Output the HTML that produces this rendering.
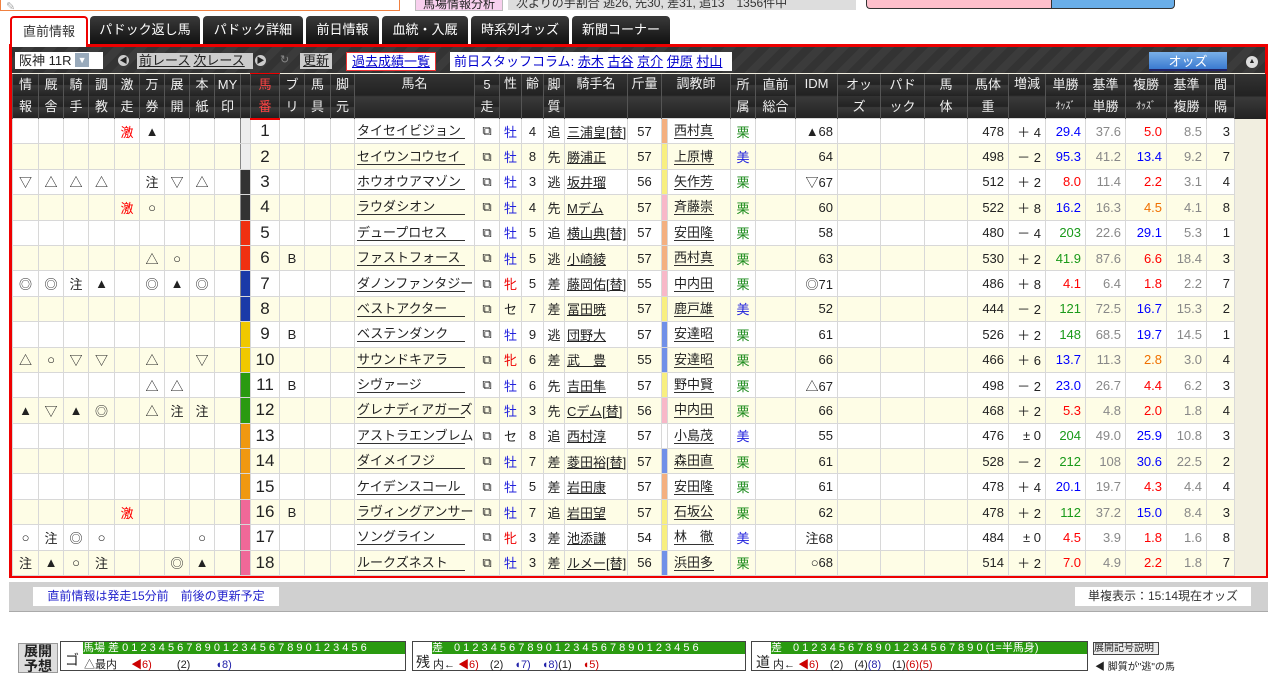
<!DOCTYPE html>
<html><head><meta charset="utf-8">
<style>
*{box-sizing:border-box;margin:0;padding:0}
body{width:1280px;height:670px;overflow:hidden;background:#fff;font-family:"Liberation Sans","Noto Sans CJK JP",sans-serif;font-size:13px;color:#222;position:relative}
.abs{position:absolute}
.tab{position:absolute;top:16px;height:28px;background:linear-gradient(#3a3a3a,#111);color:#fff;border-radius:4px 4px 0 0;text-align:center;line-height:27px;font-size:13px}
.tab.on{background:#fff;color:#333;border:2px solid #e00;border-bottom:none;height:31px}
#box{position:absolute;left:9px;top:44px;width:1259px;height:534px;border:3px solid #e00;background:#f1eee0}
#bar{position:absolute;left:12px;top:47px;width:1253px;height:26px;background:repeating-linear-gradient(135deg,#333 0 8px,#3b3b3b 8px 16px)}
table{position:absolute;left:12px;top:73px;border-collapse:collapse;table-layout:fixed;width:1253px}
th{background:linear-gradient(#333,#222 48%,#3a3a3a 52%,#222);color:#eee;font-weight:normal;font-size:13px;height:22.5px;line-height:20px;border-left:1px solid #555;vertical-align:middle}
td{height:25.4px;border:1px solid #d8d8d8;text-align:center;white-space:nowrap;overflow:hidden;font-size:13px;padding:0}
tr.y td{background:#fefde6}
tr.w td{background:#fff}
td.n{font-size:17px;color:#222}
td.nm{text-align:left;padding-left:2px}
td.nm span{border-bottom:1px solid #333;display:inline-block;width:108px;line-height:15px}
td.jk{text-align:left;padding-left:2px;text-decoration:underline}
td.tr{text-align:left;padding-left:6px}
td.tr span{border-bottom:1px solid #333;display:inline-block;width:40px;line-height:15px}
td.r{text-align:right;padding-right:4px}
.red{color:#f00}.bl{color:#00f}.gr{color:#1a9a1a}.or{color:#f07000}.gy{color:#888}
.ma{color:#1a8a1a}.mi{color:#22d}
.sx{color:#22d}.sf{color:#e00}
td.sep{border-right:1px solid #888}
</style></head><body>
<div class="abs" style="left:0;top:0;width:400px;height:11px;border:1px solid #f08040;border-top:none"></div>
<div class="abs" style="left:6px;top:0;color:#aaa;font-size:11px">✎</div>
<div class="abs" style="left:415px;top:-4px;width:88px;height:15px;background:#f8d0ee;border:1px solid #bbb;font-size:12px;text-align:center;line-height:15px">馬場情報分析</div>
<div class="abs" style="left:508px;top:-4px;width:348px;height:14px;background:#ddd;font-size:12px;line-height:14px;color:#333;padding-left:8px">次よりの手割合 逃26, 先30, 差31, 追13　1356件中</div>
<div class="abs" style="left:866px;top:-3px;width:186px;height:12px;background:#ffc0cc;border:1px solid #333;border-right:none;border-radius:0 0 0 4px"></div>
<div class="abs" style="left:1051px;top:-3px;width:124px;height:12px;background:#6aaee8;border:1px solid #333;border-radius:0 0 4px 0"></div>

<div class="tab" style="left:75px;width:0"></div>
<div id="box"></div>
<div class="tab on" style="left:10px;width:78px;top:16px">直前情報</div>
<div class="tab" style="left:90px;width:110px">パドック返し馬</div>
<div class="tab" style="left:203px;width:100px">パドック詳細</div>
<div class="tab" style="left:306px;width:73px">前日情報</div>
<div class="tab" style="left:382px;width:86px">血統・入厩</div>
<div class="tab" style="left:471px;width:98px">時系列オッズ</div>
<div class="tab" style="left:572px;width:98px">新聞コーナー</div>

<div id="bar"></div>
<div class="abs" style="left:15px;top:52px;width:88px;height:17px;background:#fff;font-size:13px;line-height:17px;padding-left:4px">阪神 11R <span style="display:inline-block;width:14px;height:14px;background:#9ab;color:#fff;font-size:9px;line-height:14px;text-align:center;vertical-align:top;margin-top:1px">▼</span></div>
<div class="abs" style="left:118px;top:55px;width:11px;height:11px;border-radius:6px;background:#ccc;font-size:8px;line-height:11px;text-align:center">◀</div>
<div class="abs" style="left:137px;top:53px;width:116px;height:16px;background:#ccc;font-size:13px;line-height:16px;text-decoration:underline;padding-left:2px">前レース<span style="margin-left:3px">次レース</span></div>
<div class="abs" style="left:255px;top:55px;width:11px;height:11px;border-radius:6px;background:#ccc;font-size:8px;line-height:11px;text-align:center">▶</div>
<div class="abs" style="left:280px;top:53px;color:#888;font-size:11px">↻</div>
<div class="abs" style="left:300px;top:53px;width:32px;height:16px;background:#ccc;font-size:13px;line-height:16px;text-decoration:underline;text-align:center">更新</div>
<div class="abs" style="left:346px;top:52px;width:90px;height:19px;background:#fff;border:1px solid #e33;font-size:13px;line-height:17px;color:#00c;text-decoration:underline;text-align:center">過去成績一覧</div>
<div class="abs" style="left:450px;top:52px;width:282px;height:19px;background:#fff;font-size:13px;line-height:19px;color:#00c;padding-left:4px">前日スタッフコラム: <u>赤木</u> <u>古谷</u> <u>京介</u> <u>伊原</u> <u>村山</u></div>
<div class="abs" style="left:1149px;top:52px;width:78px;height:19px;background:linear-gradient(#7ab0e8,#3a7ad0);color:#fff;font-size:13px;line-height:19px;text-align:center;border-bottom:2px solid #226">オッズ</div>
<div class="abs" style="left:1246px;top:56px;width:12px;height:12px;border-radius:6px;background:#ddd;font-size:7px;line-height:12px;text-align:center">▲</div>

<table>
<colgroup>
<col style="width:26px"><col style="width:25px"><col style="width:25px"><col style="width:26px"><col style="width:25px"><col style="width:25px"><col style="width:25px"><col style="width:25px"><col style="width:26px"><col style="width:10px"><col style="width:29px"><col style="width:25px"><col style="width:26px"><col style="width:24px"><col style="width:120px"><col style="width:25px"><col style="width:22px"><col style="width:22px"><col style="width:21px"><col style="width:63px"><col style="width:34px"><col style="width:6px"><col style="width:63px"><col style="width:25px"><col style="width:40px"><col style="width:42px"><col style="width:43px"><col style="width:44px"><col style="width:43px"><col style="width:41px"><col style="width:37px"><col style="width:40px"><col style="width:40px"><col style="width:41px"><col style="width:40px"><col style="width:28px"><col style="width:31px">
</colgroup>
<tr><th>情</th><th>厩</th><th>騎</th><th>調</th><th>激</th><th>万</th><th>展</th><th>本</th><th>MY</th><th></th><th style="color:#f44;border-top:1px solid #e00">馬</th><th>ブ</th><th>馬</th><th>脚</th><th rowspan="2" style="vertical-align:top">馬名</th><th>5</th><th rowspan="2" style="vertical-align:top">性</th><th rowspan="2" style="vertical-align:top">齢</th><th>脚</th><th rowspan="2" style="vertical-align:top">騎手名</th><th rowspan="2" style="vertical-align:top">斤量</th><th colspan="2" rowspan="2" style="vertical-align:top">調教師</th><th>所</th><th>直前</th><th rowspan="2" style="vertical-align:top">IDM</th><th>オッ</th><th>パド</th><th>馬</th><th>馬体</th><th rowspan="2" style="vertical-align:top">増減</th><th>単勝</th><th>基準</th><th>複勝</th><th>基準</th><th>間</th><th rowspan="2"></th></tr>
<tr><th>報</th><th>舎</th><th>手</th><th>教</th><th>走</th><th>券</th><th>開</th><th>紙</th><th>印</th><th></th><th style="color:#f44;border-bottom:2px solid #e00">番</th><th>リ</th><th>具</th><th>元</th><th>走</th><th>質</th><th>属</th><th>総合</th><th>ズ</th><th>ック</th><th>体</th><th>重</th><th style="font-size:10px">ｵｯｽﾞ</th><th>単勝</th><th style="font-size:10px">ｵｯｽﾞ</th><th>複勝</th><th>隔</th></tr>

<tr class="w"><td></td><td></td><td></td><td></td><td class="red">激</td><td>▲</td><td></td><td></td><td class="sep"></td><td style="background:#eee"></td><td class="n">1</td><td></td><td></td><td></td><td class="nm"><span>タイセイビジョン</span></td><td>⧉</td><td class="sx">牡</td><td>4</td><td>追</td><td class="jk">三浦皇[替]</td><td>57</td><td style="background:#f4b080"></td><td class="tr"><span>西村真</span></td><td class="ma">栗</td><td></td><td class="r">▲68</td><td></td><td></td><td></td><td class="r">478</td><td class="r">＋ 4</td><td class="r bl">29.4</td><td class="r gy">37.6</td><td class="r red">5.0</td><td class="r gy">8.5</td><td class="r">3</td><td style="background:#f1eee0;border:none"></td></tr>
<tr class="y"><td></td><td></td><td></td><td></td><td></td><td></td><td></td><td></td><td class="sep"></td><td style="background:#eee"></td><td class="n">2</td><td></td><td></td><td></td><td class="nm"><span>セイウンコウセイ</span></td><td>⧉</td><td class="sx">牡</td><td>8</td><td>先</td><td class="jk">勝浦正</td><td>57</td><td style="background:#f8ef80"></td><td class="tr"><span>上原博</span></td><td class="mi">美</td><td></td><td class="r">64</td><td></td><td></td><td></td><td class="r">498</td><td class="r">－ 2</td><td class="r bl">95.3</td><td class="r gy">41.2</td><td class="r bl">13.4</td><td class="r gy">9.2</td><td class="r">7</td><td style="background:#f1eee0;border:none"></td></tr>
<tr class="w"><td>▽</td><td>△</td><td>△</td><td>△</td><td></td><td>注</td><td>▽</td><td>△</td><td class="sep"></td><td style="background:#333"></td><td class="n">3</td><td></td><td></td><td></td><td class="nm"><span>ホウオウアマゾン</span></td><td>⧉</td><td class="sx">牡</td><td>3</td><td>逃</td><td class="jk">坂井瑠</td><td>56</td><td style="background:#f8ef80"></td><td class="tr"><span>矢作芳</span></td><td class="ma">栗</td><td></td><td class="r">▽67</td><td></td><td></td><td></td><td class="r">512</td><td class="r">＋ 2</td><td class="r red">8.0</td><td class="r gy">11.4</td><td class="r red">2.2</td><td class="r gy">3.1</td><td class="r">4</td><td style="background:#f1eee0;border:none"></td></tr>
<tr class="y"><td></td><td></td><td></td><td></td><td class="red">激</td><td>○</td><td></td><td></td><td class="sep"></td><td style="background:#333"></td><td class="n">4</td><td></td><td></td><td></td><td class="nm"><span>ラウダシオン</span></td><td>⧉</td><td class="sx">牡</td><td>4</td><td>先</td><td class="jk">Mデム</td><td>57</td><td style="background:#f8b8c8"></td><td class="tr"><span>斉藤崇</span></td><td class="ma">栗</td><td></td><td class="r">60</td><td></td><td></td><td></td><td class="r">522</td><td class="r">＋ 8</td><td class="r bl">16.2</td><td class="r gy">16.3</td><td class="r or">4.5</td><td class="r gy">4.1</td><td class="r">8</td><td style="background:#f1eee0;border:none"></td></tr>
<tr class="w"><td></td><td></td><td></td><td></td><td></td><td></td><td></td><td></td><td class="sep"></td><td style="background:#f03010"></td><td class="n">5</td><td></td><td></td><td></td><td class="nm"><span>デュープロセス</span></td><td>⧉</td><td class="sx">牡</td><td>5</td><td>追</td><td class="jk">横山典[替]</td><td>57</td><td style="background:#f4b080"></td><td class="tr"><span>安田隆</span></td><td class="ma">栗</td><td></td><td class="r">58</td><td></td><td></td><td></td><td class="r">480</td><td class="r">－ 4</td><td class="r gr">203</td><td class="r gy">22.6</td><td class="r bl">29.1</td><td class="r gy">5.3</td><td class="r">1</td><td style="background:#f1eee0;border:none"></td></tr>
<tr class="y"><td></td><td></td><td></td><td></td><td></td><td>△</td><td>○</td><td></td><td class="sep"></td><td style="background:#f03010"></td><td class="n">6</td><td>B</td><td></td><td></td><td class="nm"><span>ファストフォース</span></td><td>⧉</td><td class="sx">牡</td><td>5</td><td>逃</td><td class="jk">小崎綾</td><td>57</td><td style="background:#f4b080"></td><td class="tr"><span>西村真</span></td><td class="ma">栗</td><td></td><td class="r">63</td><td></td><td></td><td></td><td class="r">530</td><td class="r">＋ 2</td><td class="r gr">41.9</td><td class="r gy">87.6</td><td class="r red">6.6</td><td class="r gy">18.4</td><td class="r">3</td><td style="background:#f1eee0;border:none"></td></tr>
<tr class="w"><td>◎</td><td>◎</td><td>注</td><td>▲</td><td></td><td>◎</td><td>▲</td><td>◎</td><td class="sep"></td><td style="background:#1a3aa8"></td><td class="n">7</td><td></td><td></td><td></td><td class="nm"><span>ダノンファンタジー</span></td><td>⧉</td><td class="sf">牝</td><td>5</td><td>差</td><td class="jk">藤岡佑[替]</td><td>55</td><td style="background:#f8b8c8"></td><td class="tr"><span>中内田</span></td><td class="ma">栗</td><td></td><td class="r">◎71</td><td></td><td></td><td></td><td class="r">486</td><td class="r">＋ 8</td><td class="r red">4.1</td><td class="r gy">6.4</td><td class="r red">1.8</td><td class="r gy">2.2</td><td class="r">7</td><td style="background:#f1eee0;border:none"></td></tr>
<tr class="y"><td></td><td></td><td></td><td></td><td></td><td></td><td></td><td></td><td class="sep"></td><td style="background:#1a3aa8"></td><td class="n">8</td><td></td><td></td><td></td><td class="nm"><span>ベストアクター</span></td><td>⧉</td><td>セ</td><td>7</td><td>差</td><td class="jk">冨田暁</td><td>57</td><td style="background:#f8ef80"></td><td class="tr"><span>鹿戸雄</span></td><td class="mi">美</td><td></td><td class="r">52</td><td></td><td></td><td></td><td class="r">444</td><td class="r">－ 2</td><td class="r gr">121</td><td class="r gy">72.5</td><td class="r bl">16.7</td><td class="r gy">15.3</td><td class="r">2</td><td style="background:#f1eee0;border:none"></td></tr>
<tr class="w"><td></td><td></td><td></td><td></td><td></td><td></td><td></td><td></td><td class="sep"></td><td style="background:#f0c800"></td><td class="n">9</td><td>B</td><td></td><td></td><td class="nm"><span>ベステンダンク</span></td><td>⧉</td><td class="sx">牡</td><td>9</td><td>逃</td><td class="jk">団野大</td><td>57</td><td style="background:#7090e8"></td><td class="tr"><span>安達昭</span></td><td class="ma">栗</td><td></td><td class="r">61</td><td></td><td></td><td></td><td class="r">526</td><td class="r">＋ 2</td><td class="r gr">148</td><td class="r gy">68.5</td><td class="r bl">19.7</td><td class="r gy">14.5</td><td class="r">1</td><td style="background:#f1eee0;border:none"></td></tr>
<tr class="y"><td>△</td><td>○</td><td>▽</td><td>▽</td><td></td><td>△</td><td></td><td>▽</td><td class="sep"></td><td style="background:#f0c800"></td><td class="n">10</td><td></td><td></td><td></td><td class="nm"><span>サウンドキアラ</span></td><td>⧉</td><td class="sf">牝</td><td>6</td><td>差</td><td class="jk">武　豊</td><td>55</td><td style="background:#7090e8"></td><td class="tr"><span>安達昭</span></td><td class="ma">栗</td><td></td><td class="r">66</td><td></td><td></td><td></td><td class="r">466</td><td class="r">＋ 6</td><td class="r bl">13.7</td><td class="r gy">11.3</td><td class="r or">2.8</td><td class="r gy">3.0</td><td class="r">4</td><td style="background:#f1eee0;border:none"></td></tr>
<tr class="w"><td></td><td></td><td></td><td></td><td></td><td>△</td><td>△</td><td></td><td class="sep"></td><td style="background:#2a9a10"></td><td class="n">11</td><td>B</td><td></td><td></td><td class="nm"><span>シヴァージ</span></td><td>⧉</td><td class="sx">牡</td><td>6</td><td>先</td><td class="jk">吉田隼</td><td>57</td><td style="background:#f8ef80"></td><td class="tr"><span>野中賢</span></td><td class="ma">栗</td><td></td><td class="r">△67</td><td></td><td></td><td></td><td class="r">498</td><td class="r">－ 2</td><td class="r bl">23.0</td><td class="r gy">26.7</td><td class="r red">4.4</td><td class="r gy">6.2</td><td class="r">3</td><td style="background:#f1eee0;border:none"></td></tr>
<tr class="y"><td>▲</td><td>▽</td><td>▲</td><td>◎</td><td></td><td>△</td><td>注</td><td>注</td><td class="sep"></td><td style="background:#2a9a10"></td><td class="n">12</td><td></td><td></td><td></td><td class="nm"><span>グレナディアガーズ</span></td><td>⧉</td><td class="sx">牡</td><td>3</td><td>先</td><td class="jk">Cデム[替]</td><td>56</td><td style="background:#f8b8c8"></td><td class="tr"><span>中内田</span></td><td class="ma">栗</td><td></td><td class="r">66</td><td></td><td></td><td></td><td class="r">468</td><td class="r">＋ 2</td><td class="r red">5.3</td><td class="r gy">4.8</td><td class="r red">2.0</td><td class="r gy">1.8</td><td class="r">4</td><td style="background:#f1eee0;border:none"></td></tr>
<tr class="w"><td></td><td></td><td></td><td></td><td></td><td></td><td></td><td></td><td class="sep"></td><td style="background:#f09810"></td><td class="n">13</td><td></td><td></td><td></td><td class="nm"><span>アストラエンブレム</span></td><td>⧉</td><td>セ</td><td>8</td><td>追</td><td class="jk">西村淳</td><td>57</td><td></td><td class="tr"><span>小島茂</span></td><td class="mi">美</td><td></td><td class="r">55</td><td></td><td></td><td></td><td class="r">476</td><td class="r">± 0</td><td class="r gr">204</td><td class="r gy">49.0</td><td class="r bl">25.9</td><td class="r gy">10.8</td><td class="r">3</td><td style="background:#f1eee0;border:none"></td></tr>
<tr class="y"><td></td><td></td><td></td><td></td><td></td><td></td><td></td><td></td><td class="sep"></td><td style="background:#f09810"></td><td class="n">14</td><td></td><td></td><td></td><td class="nm"><span>ダイメイフジ</span></td><td>⧉</td><td class="sx">牡</td><td>7</td><td>差</td><td class="jk">菱田裕[替]</td><td>57</td><td style="background:#7090e8"></td><td class="tr"><span>森田直</span></td><td class="ma">栗</td><td></td><td class="r">61</td><td></td><td></td><td></td><td class="r">528</td><td class="r">－ 2</td><td class="r gr">212</td><td class="r gy">108</td><td class="r bl">30.6</td><td class="r gy">22.5</td><td class="r">2</td><td style="background:#f1eee0;border:none"></td></tr>
<tr class="w"><td></td><td></td><td></td><td></td><td></td><td></td><td></td><td></td><td class="sep"></td><td style="background:#f09810"></td><td class="n">15</td><td></td><td></td><td></td><td class="nm"><span>ケイデンスコール</span></td><td>⧉</td><td class="sx">牡</td><td>5</td><td>差</td><td class="jk">岩田康</td><td>57</td><td style="background:#f4b080"></td><td class="tr"><span>安田隆</span></td><td class="ma">栗</td><td></td><td class="r">61</td><td></td><td></td><td></td><td class="r">478</td><td class="r">＋ 4</td><td class="r bl">20.1</td><td class="r gy">19.7</td><td class="r red">4.3</td><td class="r gy">4.4</td><td class="r">4</td><td style="background:#f1eee0;border:none"></td></tr>
<tr class="y"><td></td><td></td><td></td><td></td><td class="red">激</td><td></td><td></td><td></td><td class="sep"></td><td style="background:#f06898"></td><td class="n">16</td><td>B</td><td></td><td></td><td class="nm"><span>ラヴィングアンサー</span></td><td>⧉</td><td class="sx">牡</td><td>7</td><td>追</td><td class="jk">岩田望</td><td>57</td><td style="background:#f8ef80"></td><td class="tr"><span>石坂公</span></td><td class="ma">栗</td><td></td><td class="r">62</td><td></td><td></td><td></td><td class="r">478</td><td class="r">＋ 2</td><td class="r gr">112</td><td class="r gy">37.2</td><td class="r bl">15.0</td><td class="r gy">8.4</td><td class="r">3</td><td style="background:#f1eee0;border:none"></td></tr>
<tr class="w"><td>○</td><td>注</td><td>◎</td><td>○</td><td></td><td></td><td></td><td>○</td><td class="sep"></td><td style="background:#f06898"></td><td class="n">17</td><td></td><td></td><td></td><td class="nm"><span>ソングライン</span></td><td>⧉</td><td class="sf">牝</td><td>3</td><td>差</td><td class="jk">池添謙</td><td>54</td><td style="background:#f8ef80"></td><td class="tr"><span>林　徹</span></td><td class="mi">美</td><td></td><td class="r">注68</td><td></td><td></td><td></td><td class="r">484</td><td class="r">± 0</td><td class="r red">4.5</td><td class="r gy">3.9</td><td class="r red">1.8</td><td class="r gy">1.6</td><td class="r">8</td><td style="background:#f1eee0;border:none"></td></tr>
<tr class="y"><td>注</td><td>▲</td><td>○</td><td>注</td><td></td><td></td><td>◎</td><td>▲</td><td class="sep"></td><td style="background:#f06898"></td><td class="n">18</td><td></td><td></td><td></td><td class="nm"><span>ルークズネスト</span></td><td>⧉</td><td class="sx">牡</td><td>3</td><td>差</td><td class="jk">ルメー[替]</td><td>56</td><td style="background:#7090e8"></td><td class="tr"><span>浜田多</span></td><td class="ma">栗</td><td></td><td class="r">○68</td><td></td><td></td><td></td><td class="r">514</td><td class="r">＋ 2</td><td class="r red">7.0</td><td class="r gy">4.9</td><td class="r red">2.2</td><td class="r gy">1.8</td><td class="r">7</td><td style="background:#f1eee0;border:none"></td></tr>
</table>

<div class="abs" style="left:9px;top:582px;width:1259px;height:30px;background:#d0d0d0;border-bottom:1px solid #aaa"></div>
<div class="abs" style="left:33px;top:587px;width:246px;height:19px;background:#fff;color:#22c;font-size:12px;line-height:19px;text-align:center">直前情報は発走15分前　前後の更新予定</div>
<div class="abs" style="left:1075px;top:587px;width:176px;height:19px;background:#fff;color:#333;font-size:12px;line-height:19px;text-align:center">単複表示：15:14現在オッズ</div>

<div class="abs" style="left:18px;top:643px;width:40px;height:30px;background:#ddd;border:1px solid #999;font-size:14px;font-weight:bold;line-height:15px;text-align:center">展開<br>予想</div>
<div class="abs" style="left:60px;top:641px;width:346px;height:30px;border:1px solid #444"></div>
<div class="abs" style="left:83px;top:642px;width:322px;height:12px;background:#2a9a10;color:#fff;font-size:11px;line-height:12px;white-space:nowrap;overflow:hidden">馬場 差 0 1 2 3 4 5 6 7 8 9 0 1 2 3 4 5 6 7 8 9 0 1 2 3 4 5 6</div>
<div class="abs" style="left:65px;top:650px;font-size:14px">ゴ</div>
<div class="abs" style="left:84px;top:656px;font-size:11px;white-space:nowrap">△最内　 <span style="color:#c00">◀6)</span>　　 (2)　　 <span style="color:#22a">◖8)</span></div>
<div class="abs" style="left:412px;top:641px;width:334px;height:30px;border:1px solid #444"></div>
<div class="abs" style="left:432px;top:642px;width:313px;height:12px;background:#2a9a10;color:#fff;font-size:11px;line-height:12px;white-space:nowrap;overflow:hidden">差　0 1 2 3 4 5 6 7 8 9 0 1 2 3 4 5 6 7 8 9 0 1 2 3 4 5 6</div>
<div class="abs" style="left:416px;top:652px;font-size:14px">残</div>
<div class="abs" style="left:433px;top:656px;font-size:11px;white-space:nowrap">内← <span style="color:#c00">◀6)</span>　(2)　<span style="color:#22a">◖7)</span>　<span style="color:#22a">◖8)</span>(1)　<span style="color:#c00">◖5)</span></div>
<div class="abs" style="left:751px;top:641px;width:337px;height:30px;border:1px solid #444"></div>
<div class="abs" style="left:771px;top:642px;width:316px;height:12px;background:#2a9a10;color:#fff;font-size:11px;line-height:12px;white-space:nowrap;overflow:hidden">差　0 1 2 3 4 5 6 7 8 9 0 1 2 3 4 5 6 7 8 9 0 (1=半馬身)</div>
<div class="abs" style="left:756px;top:652px;font-size:14px">道</div>
<div class="abs" style="left:773px;top:656px;font-size:11px;white-space:nowrap">内← <span style="color:#c00">◀6)</span>　(2)　(4)<span style="color:#22a">(8)</span>　(1)<span style="color:#c00">(6)(5)</span></div>
<div class="abs" style="left:1093px;top:642px;width:66px;height:13px;background:#eee;border:1px solid #444;font-size:10px;line-height:12px">展開記号説明</div>
<div class="abs" style="left:1095px;top:658px;font-size:10px">◀ 脚質が"逃"の馬</div>
</body></html>
